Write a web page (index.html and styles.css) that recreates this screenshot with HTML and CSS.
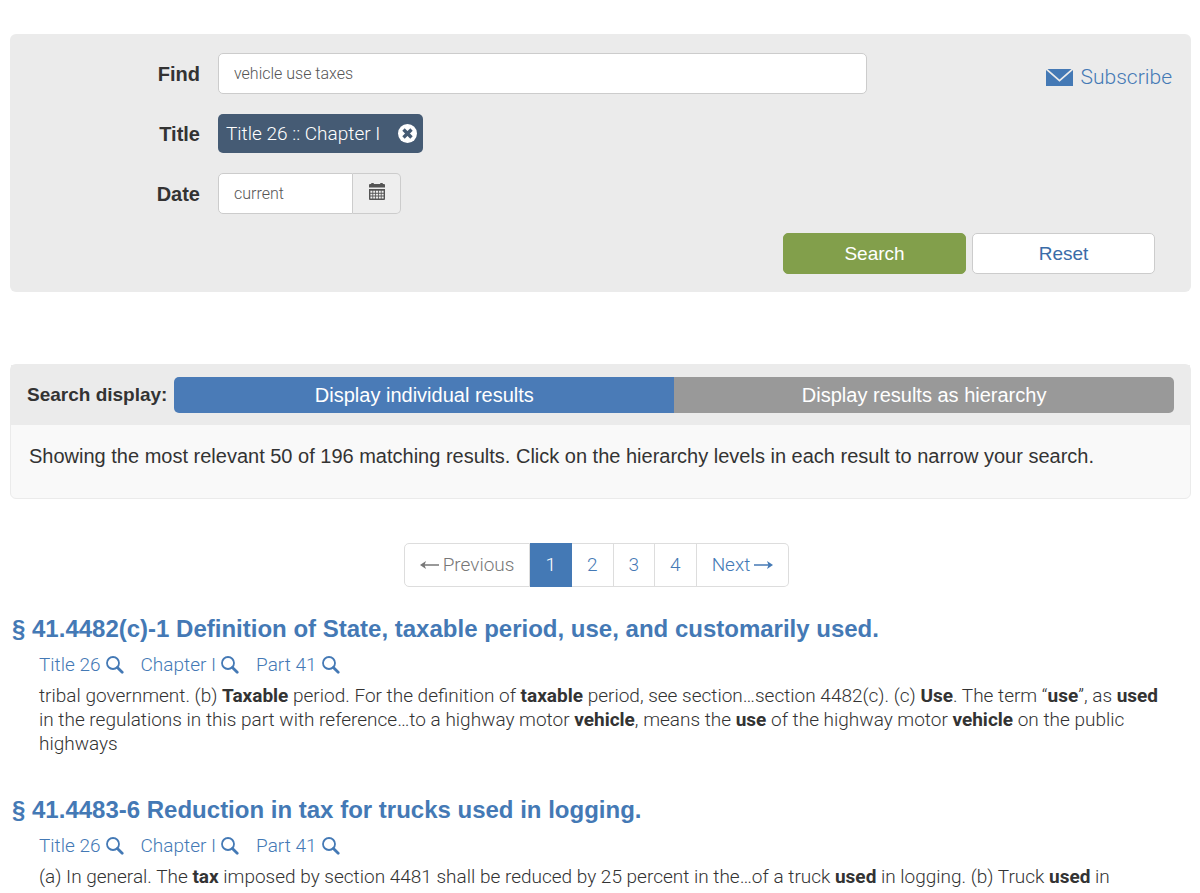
FILE: index.html
```html
<!DOCTYPE html>
<html lang="en">

<head>
    <meta charset="UTF-8">
    <meta name="viewport" content="width=device-width, initial-scale=1.0">
    <title>Search Results</title>
    <link rel="stylesheet" href="styles.css">
</head>

<body>
    <!-- shared icons -->
    <svg class="icon-defs" aria-hidden="true">
        <symbol id="icon-search" viewBox="0 0 18 18">
            <circle cx="7" cy="7" r="6" fill="none" stroke="currentColor" stroke-width="1.8"/>
            <path d="M11.4 11.4 L16.2 16.2" stroke="currentColor" stroke-width="2.8" stroke-linecap="round"/>
        </symbol>
    </svg>

    <form class="search-form">
        <a href="#" class="subscribe">
            <svg class="icon-mail" viewBox="0 0 27 17" aria-hidden="true">
                <path d="M1.5 0 H25.5 L13.5 10.5 Z M0 1 L13.5 12.7 L27 1 V17 H0 Z" fill="currentColor"/>
            </svg>
            Subscribe
        </a>
        <div class="form-row">
            <label for="find">Find</label>
            <input type="text" id="find" class="find-input" value="vehicle use taxes">
        </div>
        <div class="form-row">
            <span class="row-label">Title</span>
            <div class="chip">
                <span>Title 26 :: Chapter I</span>
                <button type="button" class="chip-remove" aria-label="Remove title filter">
                    <svg viewBox="0 0 18 18">
                        <circle cx="9" cy="9" r="9" fill="#fff"/>
                        <path d="M5.2 5.2 L12.8 12.8 M12.8 5.2 L5.2 12.8" stroke="#455b74" stroke-width="3.2"/>
                    </svg>
                </button>
            </div>
        </div>
        <div class="form-row">
            <label for="date">Date</label>
            <div class="date-group">
                <input type="text" id="date" value="current">
                <button type="button" class="date-button" aria-label="Choose date">
                    <svg viewBox="0 0 16 17">
                        <path d="M0 2 Q0 1 1 1 H2 Q2 0 3 0 H4 Q5 0 5 1 H11 Q11 0 12 0 H13 Q14 0 14 1 H15 Q16 1 16 2 V4.5 H0 Z M0 6 H16 V16 Q16 17 15 17 H1 Q0 17 0 16 Z" fill="#555"/>
                        <path d="M1.4 8.7 H14.6 M1.4 11.6 H14.6 M1.4 14.5 H14.6" stroke="#eee" stroke-width="1.9" stroke-dasharray="2 .8"/>
                    </svg>
                </button>
            </div>
        </div>
        <div class="form-actions">
            <button type="submit" class="btn btn-search">Search</button>
            <button type="reset" class="btn btn-reset">Reset</button>
        </div>
    </form>

    <div class="display-panel">
        <div class="display-header">
            <strong>Search display:</strong>
            <div class="display-toggle">
                <button type="button" class="active">Display individual results</button>
                <button type="button">Display results as hierarchy</button>
            </div>
        </div>
        <p>Showing the most relevant 50 of 196 matching results. Click on the hierarchy levels in each result to narrow your search.</p>
    </div>

    <nav class="pagination" aria-label="Result pages">
        <ul>
            <li><span class="disabled">
                <svg viewBox="0 0 19 10" aria-hidden="true"><path d="M3 5 H19" stroke="currentColor" stroke-width="1.5"/><path d="M0 5 L6 1 L4.5 5 L6 9 Z" fill="currentColor"/></svg>
                Previous</span></li>
            <li><a href="#" class="current">1</a></li>
            <li><a href="#">2</a></li>
            <li><a href="#">3</a></li>
            <li><a href="#">4</a></li>
            <li><a href="#">Next
                <svg viewBox="0 0 19 10" aria-hidden="true"><path d="M0 5 H16" stroke="currentColor" stroke-width="1.5"/><path d="M19 5 L13 1 L14.5 5 L13 9 Z" fill="currentColor"/></svg></a></li>
        </ul>
    </nav>

    <main class="results">
        <div class="result">
            <h2><a href="#">§ 41.4482(c)-1 Definition of State, <b>taxable</b> period, <b>use</b>, and customarily <b>used.</b></a></h2>
            <div class="levels">
                <a href="#">Title 26 <svg><use href="#icon-search"/></svg></a>
                <a href="#">Chapter I <svg><use href="#icon-search"/></svg></a>
                <a href="#">Part 41 <svg><use href="#icon-search"/></svg></a>
            </div>
            <p>tribal government. (b) <b>Taxable</b> period. For the definition of <b>taxable</b> period, see section…section 4482(c). (c) <b>Use</b>. The term “<b>use</b>”, as <b>used</b> in the regulations in this part with reference…to a highway motor <b>vehicle</b>, means the <b>use</b> of the highway motor <b>vehicle</b> on the public highways</p>
        </div>
        <div class="result">
            <h2><a href="#">§ 41.4483-6 Reduction in <b>tax</b> for trucks <b>used</b> in logging.</a></h2>
            <div class="levels">
                <a href="#">Title 26 <svg><use href="#icon-search"/></svg></a>
                <a href="#">Chapter I <svg><use href="#icon-search"/></svg></a>
                <a href="#">Part 41 <svg><use href="#icon-search"/></svg></a>
            </div>
            <p>(a) In general. The <b>tax</b> imposed by section 4481 shall be reduced by 25 percent in the…of a truck <b>used</b> in logging. (b) Truck <b>used</b> in</p>
        </div>
    </main>
</body>

</html>
```

FILE: styles.css
```css
* {
    box-sizing: border-box;
}

body {
    font-family: Roboto, "Liberation Sans", sans-serif;
    font-size: 19px;
    font-weight: 300;
    line-height: 24px;
    color: #333;
    margin: 0;
    padding: 34px 9px 0 10px;
    background-color: #fff;
}

a {
    color: #4479b5;
    text-decoration: none;
}

a:hover {
    text-decoration: underline;
}

p {
    margin: 0;
}

button,
input {
    font: inherit;
    margin: 0;
}

button {
    cursor: pointer;
}

.icon-defs {
    display: none;
}

/* search form */
.search-form {
    position: relative;
    padding: 19px 36px 18px 0;
    background-color: #ebebeb;
    border-radius: 6px;
}

.form-row {
    display: flex;
    align-items: center;
    gap: 18px;
    height: 41px;
    margin-bottom: 19px;
}

.form-row label,
.row-label {
    width: 190px;
    font-family: "Liberation Sans", sans-serif;
    font-size: 20px;
    font-weight: bold;
    text-align: right;
}

.form-row input {
    height: 41px;
    padding: 0 15px;
    border: 1px solid #ccc;
    border-radius: 5px;
    font-size: 16px;
    color: #555;
    background-color: #fff;
}

.form-row .find-input {
    width: 649px;
    max-width: 60%;
}

.chip {
    display: flex;
    align-items: center;
    gap: 18px;
    height: 39px;
    padding: 0 6px 0 8px;
    border-radius: 5px;
    color: #fff;
    background-color: #455b74;
}

.chip-remove {
    width: 19px;
    height: 19px;
    padding: 0;
    border: none;
    background: none;
}

.chip-remove svg {
    display: block;
}

.date-group {
    display: flex;
}

.date-group input {
    width: 135px;
    border-radius: 5px 0 0 5px;
}

.date-button {
    width: 48px;
    padding: 0;
    border: 1px solid #ccc;
    border-left: none;
    border-radius: 0 5px 5px 0;
    background-color: #eee;
}

.date-button svg {
    width: 16px;
    height: 17px;
}

.subscribe {
    position: absolute;
    top: 31px;
    right: 19px;
    display: flex;
    align-items: center;
    gap: 8px;
    font-size: 21px;
}

.icon-mail {
    width: 27px;
    height: 17px;
}

.form-actions {
    display: flex;
    justify-content: flex-end;
    gap: 6px;
}

.btn {
    width: 183px;
    height: 41px;
    border: 1px solid #ccc;
    border-radius: 5px;
    font-family: "Liberation Sans", sans-serif;
    font-weight: normal;
}

.btn-search {
    color: #fff;
    background-color: #829f4b;
    border-color: #829f4b;
}

.btn-reset {
    color: #3a6ca8;
    background-color: #fff;
}

/* display options */
.display-panel {
    margin-top: 72px;
    border: 1px solid #ebebeb;
    border-radius: 6px;
    background-color: #f9f9f9;
    font-family: "Liberation Sans", sans-serif;
    font-weight: normal;
}

.display-header {
    display: flex;
    align-items: center;
    gap: 7px;
    height: 60px;
    padding: 0 16px;
    background-color: #ebebeb;
}

.display-toggle {
    display: flex;
    flex: 1;
}

.display-toggle button {
    flex: 1;
    height: 36px;
    padding: 0;
    border: none;
    border-radius: 0 5px 5px 0;
    font-size: 20px;
    color: #fff;
    background-color: #999;
}

.display-toggle .active {
    border-radius: 5px 0 0 5px;
    background-color: #4a7bb7;
}

.display-panel p {
    padding: 19px 18px 30px;
    font-size: 20px;
}

/* pagination */
.pagination ul {
    display: flex;
    justify-content: center;
    list-style: none;
    margin: 44px 0 0;
    padding: 0 8px 0 0;
}

.pagination a,
.pagination span {
    display: flex;
    align-items: center;
    gap: 4px;
    height: 44px;
    padding: 0 15px;
    border: 1px solid #ddd;
    border-left: none;
}

.pagination svg {
    width: 19px;
    height: 10px;
}

.pagination .disabled {
    color: #777;
    border-left: 1px solid #ddd;
    border-radius: 5px 0 0 5px;
}

.pagination .current {
    color: #fff;
    background-color: #4479b5;
    border-color: #4479b5;
}

.pagination li:last-child a {
    border-radius: 0 5px 5px 0;
}

/* results */
.results {
    margin-top: 26px;
}

.result {
    padding: 0 2px;
    margin-bottom: 38px;
}

.result h2 {
    margin: 0 0 8px;
    font-family: "Liberation Sans", sans-serif;
    font-size: 24px;
    font-weight: bold;
    line-height: 32px;
}

.levels {
    display: flex;
    gap: 17px;
    margin: 0 0 7px 27px;
}

.levels a {
    display: flex;
    align-items: center;
    gap: 5px;
}

.levels svg {
    width: 18px;
    height: 18px;
}

.result p {
    margin: 0 18px 0 27px;
}

.result p b {
    font-weight: 700;
}
```
